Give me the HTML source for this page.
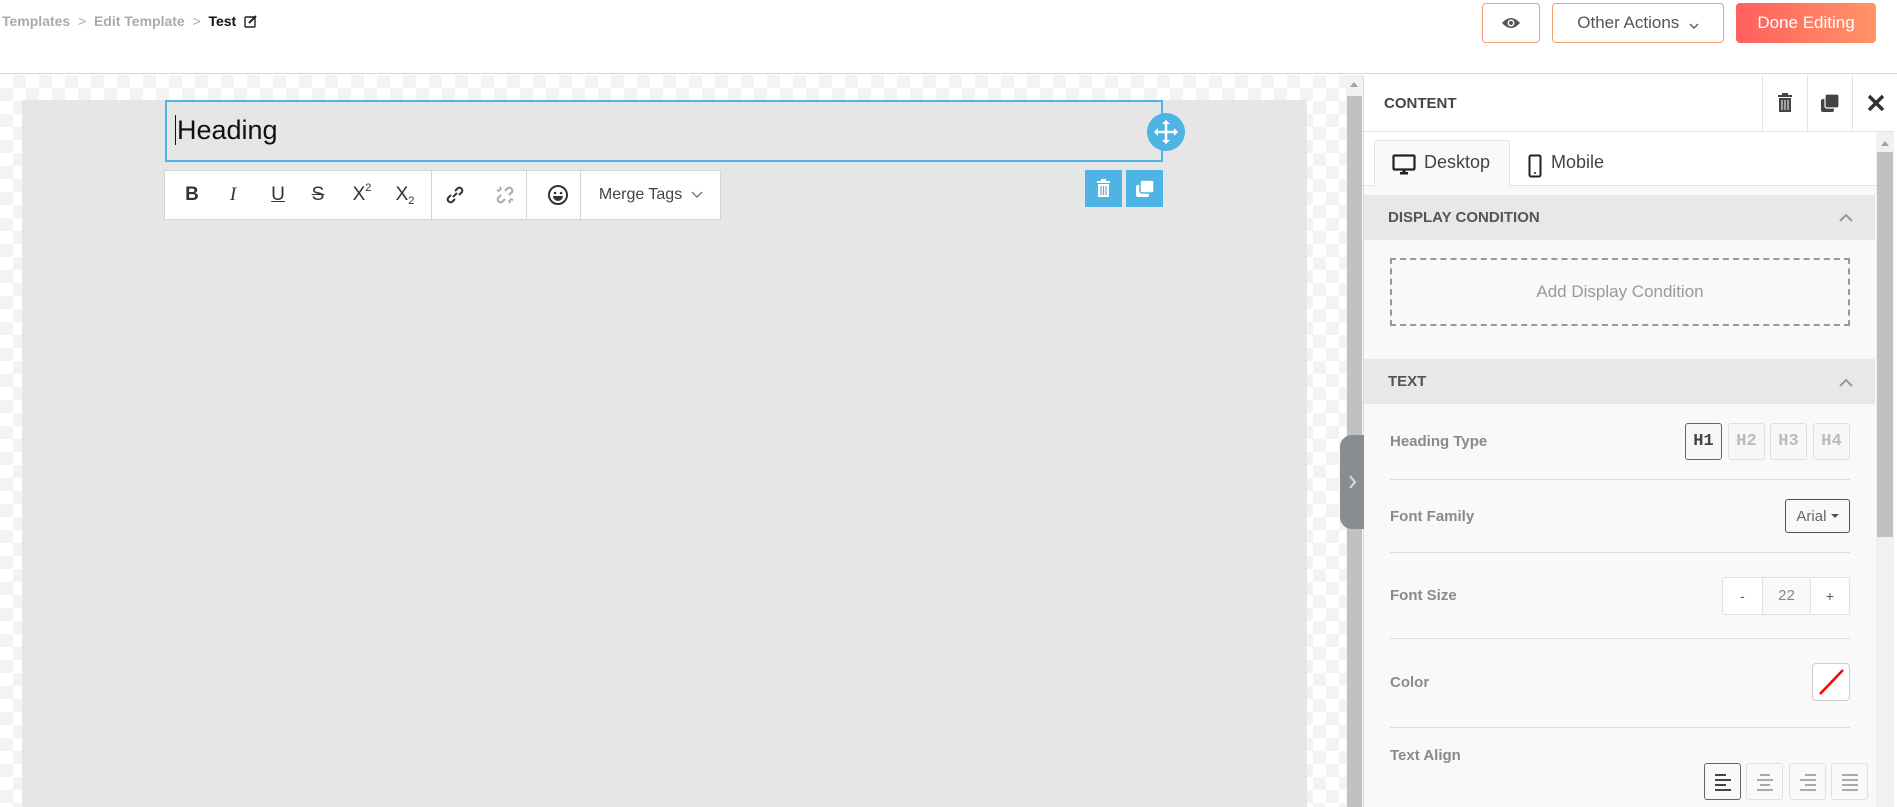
<!DOCTYPE html>
<html><head><meta charset="utf-8"><style>
*{box-sizing:border-box;margin:0;padding:0}
body{width:1897px;height:807px;overflow:hidden;background:#fff;font-family:"Liberation Sans",sans-serif;position:relative}
.a{position:absolute}
.hdr{left:0;top:0;width:1897px;height:74px;border-bottom:1px solid #d6d6d6;background:#fff}
.bc{top:13px;left:2px;font-size:14px;font-weight:bold;color:#aaa}
.bc b{color:#111}
.btn{top:3px;height:40px;border:1px solid #f4a06e;border-radius:4px;background:#fff;display:flex;align-items:center;justify-content:center;font-size:17px;color:#555}
.canvas{left:0;top:75px;width:1346px;height:732px;background-color:#fff;background-image:linear-gradient(45deg,#f3f3f3 25%,transparent 25%,transparent 75%,#f3f3f3 75%),linear-gradient(45deg,#f3f3f3 25%,transparent 25%,transparent 75%,#f3f3f3 75%);background-size:26px 26px;background-position:0 0,13px 13px}
.tb{left:164px;top:170px;width:557px;height:50px;background:#fff;border:1px solid #d5d5d5;display:flex;align-items:center}
.ti{position:absolute;top:0;height:48px;display:flex;align-items:center;justify-content:center;font-size:19px;color:#333}
.sep{position:absolute;top:0;width:1px;height:48px;background:#d5d5d5}
.lbl{left:1390px;font-size:15px;font-weight:bold;color:#8a8a8a}
.div{left:1390px;width:460px;height:1px;background:#ddd}
.hb{top:423px;width:37px;height:37px;border:1px solid #e0e0e0;border-radius:3px;background:#f7f7f7;font-family:"Liberation Mono",monospace;font-weight:bold;font-size:17px;color:#bbb;display:flex;align-items:center;justify-content:center}
.ab{top:763px;width:37px;height:37px;border:1px solid #e0e0e0;border-radius:3px;background:#f9f9f9;display:flex;align-items:center;justify-content:center}
.sh{left:1364px;width:511px;height:45px;background:#e8e8e8;font-size:15px;font-weight:bold;color:#555;padding-left:24px;line-height:45px}
</style></head><body>
<div class="a hdr"></div>
<div class="a bc">Templates &nbsp;<span style="font-weight:normal">&gt;</span>&nbsp; Edit Template &nbsp;<span style="font-weight:normal">&gt;</span>&nbsp; <b>Test</b> &nbsp;<svg width="14" height="14" viewBox="0 0 14 14" style="vertical-align:-2px"><rect x="1" y="3" width="10" height="10" rx="1" fill="none" stroke="#222" stroke-width="1.4"/><path d="M5 9 L12 2" stroke="#222" stroke-width="2"/></svg></div>
<div class="a btn" style="left:1482px;width:58px"><svg width="20" height="14" viewBox="0 0 20 14"><path d="M1 7 Q10 -3 19 7 Q10 17 1 7Z" fill="#555"/><circle cx="10" cy="7" r="3.5" fill="#fff"/><circle cx="10" cy="7" r="2" fill="#555"/></svg></div>
<div class="a btn" style="left:1552px;width:172px">Other Actions &nbsp;<svg width="10" height="7" viewBox="0 0 10 7" style="margin-top:6px"><path d="M1 1l4 4 4-4" fill="none" stroke="#555" stroke-width="1.4"/></svg></div>
<div class="a btn" style="left:1736px;width:140px;border:none;background:linear-gradient(90deg,#ff5f5f,#ff9466);color:#fff">Done Editing</div>

<div class="a canvas"></div>
<div class="a" style="left:22px;top:100px;width:1285px;height:707px;background:#e6e6e6"></div>
<div class="a" style="left:165px;top:100px;width:998px;height:62px;border:2px solid #4db4e4"></div>
<div class="a" style="left:175px;top:115px;font-size:27px;color:#111;font-family:'Liberation Sans',sans-serif"><span style="border-left:1px solid #111;margin-right:1px"></span>Heading</div>
<div class="a" style="left:1147px;top:113px;width:38px;height:38px;border-radius:50%;background:#4db4e4"><svg width="38" height="38" viewBox="0 0 38 38"><path d="M19 9v20M9 19h20" stroke="#fff" stroke-width="2.5"/><path d="M19 7l-4 4h8zM19 31l-4-4h8zM7 19l4-4v8zM31 19l-4-4v8z" fill="#fff"/></svg></div>
<div class="a" style="left:1085px;top:170px;width:37px;height:37px;background:#4db4e4"><svg width="37" height="37" viewBox="0 0 37 37"><rect x="12" y="11" width="13" height="2" fill="#fff"/><rect x="16" y="9" width="5" height="2" fill="#fff"/><rect x="13" y="14" width="11" height="13" fill="#fff"/><path d="M16 16v9M18.5 16v9M21 16v9" stroke="#4db4e4" stroke-width="1.2"/></svg></div>
<div class="a" style="left:1126px;top:170px;width:37px;height:37px;background:#4db4e4"><svg width="37" height="37" viewBox="0 0 37 37"><rect x="10" y="15" width="13" height="12" rx="2" fill="#fff"/><rect x="14" y="10" width="14" height="13" rx="2" fill="#fff" stroke="#4db4e4" stroke-width="1.5"/></svg></div>

<div class="a tb">
<div class="ti" style="left:14px;width:26px;font-weight:bold">B</div>
<div class="ti" style="left:55px;width:26px;font-family:'Liberation Serif',serif;font-style:italic">I</div>
<div class="ti" style="left:100px;width:26px;text-decoration:underline">U</div>
<div class="ti" style="left:140px;width:26px;text-decoration:line-through">S</div>
<div class="ti" style="left:182px;width:30px"><span>X</span><span style="font-size:11px;position:relative;top:-7px">2</span></div>
<div class="ti" style="left:225px;width:30px"><span>X</span><span style="font-size:11px;position:relative;top:6px">2</span></div>
<div class="sep" style="left:266px"></div>
<div class="ti" style="left:272px;width:36px"><svg width="22" height="22" viewBox="0 0 22 22"><path d="M9 13l4-4M7 11l-3 3a3 3 0 004 4l3-3M15 11l3-3a3 3 0 00-4-4l-3 3" fill="none" stroke="#333" stroke-width="2"/></svg></div>
<div class="ti" style="left:322px;width:36px"><svg width="22" height="22" viewBox="0 0 22 22"><path d="M7 11l-3 3a3 3 0 004 4l3-3M15 11l3-3a3 3 0 00-4-4l-3 3M6 3l1 3M3 6l3 1M16 19l-1-3M19 16l-3-1" fill="none" stroke="#aaa" stroke-width="2"/></svg></div>
<div class="sep" style="left:361px"></div>
<div class="ti" style="left:375px;width:36px"><svg width="22" height="22" viewBox="0 0 22 22"><circle cx="11" cy="11" r="9" fill="none" stroke="#333" stroke-width="2"/><circle cx="8" cy="9" r="1.3" fill="#333"/><circle cx="14" cy="9" r="1.3" fill="#333"/><path d="M6 12h10a5 5 0 01-10 0z" fill="#333"/></svg></div>
<div class="sep" style="left:415px"></div>
<div class="ti" style="left:416px;width:140px;font-size:16px;color:#444">Merge Tags &nbsp;<svg width="12" height="8" viewBox="0 0 12 8"><path d="M1 1l5 5 5-5" fill="none" stroke="#777" stroke-width="1.4"/></svg></div>
</div>

<!-- canvas scrollbar -->
<div class="a" style="left:1346px;top:75px;width:17px;height:732px;background:#f1f1f1"></div>
<div class="a" style="left:1347px;top:96px;width:15px;height:711px;background:#c1c1c1"></div>
<div class="a" style="left:1350px;top:82px;width:0;height:0;border-left:4px solid transparent;border-right:4px solid transparent;border-bottom:5px solid #a3a3a3"></div>

<!-- panel -->
<div class="a" style="left:1363px;top:75px;width:534px;height:732px;background:#fff;border-left:1px solid #ddd"></div>
<div class="a" style="left:1364px;top:131px;width:512px;height:676px;background:#f9f9f9"></div>
<div class="a" style="left:1364px;top:131px;width:530px;height:1px;background:#e4e4e4"></div>
<div class="a" style="left:1384px;top:95px;font-size:15px;font-weight:bold;color:#444">CONTENT</div>
<div class="a" style="left:1762px;top:75px;width:1px;height:56px;background:#e4e4e4"></div>
<div class="a" style="left:1807px;top:75px;width:1px;height:56px;background:#e4e4e4"></div>
<div class="a" style="left:1852px;top:75px;width:1px;height:56px;background:#e4e4e4"></div>
<svg class="a" style="left:1775px;top:93px" width="20" height="20" viewBox="0 0 20 20"><rect x="3" y="2" width="14" height="2" fill="#444"/><rect x="7" y="0" width="6" height="2" fill="#444"/><rect x="4" y="5" width="12" height="14" fill="#444"/><path d="M7 7v10M10 7v10M13 7v10" stroke="#fff" stroke-width="1"/></svg>
<svg class="a" style="left:1820px;top:93px" width="20" height="20" viewBox="0 0 20 20"><rect x="1" y="6" width="13" height="13" rx="2" fill="#444"/><rect x="5" y="1" width="14" height="14" rx="2" fill="#444" stroke="#fff" stroke-width="1.2"/></svg>
<svg class="a" style="left:1866px;top:93px" width="20" height="20" viewBox="0 0 20 20"><path d="M3 3l14 14M17 3L3 17" stroke="#333" stroke-width="3.5"/></svg>

<!-- panel scrollbar -->
<div class="a" style="left:1876px;top:132px;width:18px;height:675px;background:#f1f1f1"></div>
<div class="a" style="left:1877px;top:152px;width:16px;height:385px;background:#c1c1c1"></div>
<div class="a" style="left:1881px;top:141px;width:0;height:0;border-left:4px solid transparent;border-right:4px solid transparent;border-bottom:5px solid #a3a3a3"></div>

<!-- tabs -->
<div class="a" style="left:1364px;top:132px;width:512px;height:54px;background:#fff;border-bottom:1px solid #e4e4e4"></div>
<div class="a" style="left:1374px;top:140px;width:136px;height:47px;background:#f9f9f9;border:1px solid #e4e4e4;border-bottom:none;border-radius:3px 3px 0 0"></div>
<svg class="a" style="left:1392px;top:154px" width="24" height="22" viewBox="0 0 24 22"><rect x="1.5" y="1.5" width="21" height="14" rx="1" fill="none" stroke="#222" stroke-width="2.2"/><rect x="8" y="18" width="8" height="2.5" fill="#222"/><rect x="10.5" y="15" width="3" height="4" fill="#222"/></svg>
<div class="a" style="left:1424px;top:152px;font-size:18px;color:#444">Desktop</div>
<svg class="a" style="left:1528px;top:154px" width="14" height="24" viewBox="0 0 14 24"><rect x="1.5" y="1.5" width="11" height="21" rx="1.5" fill="none" stroke="#222" stroke-width="2"/><circle cx="7" cy="19" r="1" fill="#222"/></svg>
<div class="a" style="left:1551px;top:152px;font-size:18px;color:#444">Mobile</div>

<div class="a sh" style="top:195px">DISPLAY CONDITION</div>
<svg class="a" style="left:1838px;top:213px" width="16" height="10" viewBox="0 0 16 10"><path d="M2 8l6-6 6 6" fill="none" stroke="#999" stroke-width="2"/></svg>
<div class="a" style="left:1390px;top:258px;width:460px;height:68px;border:2px dashed #999;display:flex;align-items:center;justify-content:center;font-size:17px;color:#999">Add Display Condition</div>

<div class="a sh" style="top:359px">TEXT</div>
<svg class="a" style="left:1838px;top:378px" width="16" height="10" viewBox="0 0 16 10"><path d="M2 8l6-6 6 6" fill="none" stroke="#999" stroke-width="2"/></svg>

<div class="a lbl" style="top:433px">Heading Type</div>
<div class="a hb" style="left:1685px;border-color:#666;color:#444;background:#f7f7f7">H1</div>
<div class="a hb" style="left:1728px">H2</div>
<div class="a hb" style="left:1770px">H3</div>
<div class="a hb" style="left:1813px">H4</div>
<div class="a div" style="top:479px"></div>

<div class="a lbl" style="top:508px">Font Family</div>
<div class="a" style="left:1785px;top:499px;width:65px;height:34px;border:1px solid #555;border-radius:3px;font-size:15px;color:#666;display:flex;align-items:center;justify-content:center">Arial&nbsp;<span style="border-left:4px solid transparent;border-right:4px solid transparent;border-top:4px solid #555;display:inline-block"></span></div>
<div class="a div" style="top:552px"></div>

<div class="a lbl" style="top:587px">Font Size</div>
<div class="a" style="left:1722px;top:577px;width:128px;height:38px;border:1px solid #e0e0e0;border-radius:3px;background:#fff;font-size:14px;color:#555">
<div class="a" style="left:0;width:39px;height:36px;line-height:36px;text-align:center">-</div>
<div class="a" style="left:39px;width:49px;height:36px;line-height:36px;text-align:center;background:#f9f9f9;border-left:1px solid #e0e0e0;border-right:1px solid #e0e0e0;color:#888;font-size:15px">22</div>
<div class="a" style="left:88px;width:38px;height:36px;line-height:36px;text-align:center">+</div>
</div>
<div class="a div" style="top:638px"></div>

<div class="a lbl" style="top:674px">Color</div>
<div class="a" style="left:1812px;top:663px;width:38px;height:38px;border:1px solid #ccc;border-radius:4px;background:#fff"><svg width="36" height="36" viewBox="0 0 36 36"><path d="M7 30L30 6" stroke="red" stroke-width="2.5"/></svg></div>
<div class="a div" style="top:727px"></div>

<div class="a lbl" style="top:747px">Text Align</div>
<div class="a ab" style="left:1704px;border-color:#666"><svg width="18" height="18" viewBox="0 0 18 18"><path d="M1 2h11M1 7h16M1 12h11M1 17h16" stroke="#444" stroke-width="2"/></svg></div>
<div class="a ab" style="left:1746px"><svg width="18" height="18" viewBox="0 0 18 18"><path d="M4 2h10M1 7h16M4 12h10M1 17h16" stroke="#aaa" stroke-width="2"/></svg></div>
<div class="a ab" style="left:1789px"><svg width="18" height="18" viewBox="0 0 18 18"><path d="M6 2h11M1 7h16M6 12h11M1 17h16" stroke="#aaa" stroke-width="2"/></svg></div>
<div class="a ab" style="left:1831px"><svg width="18" height="18" viewBox="0 0 18 18"><path d="M1 2h16M1 7h16M1 12h16M1 17h16" stroke="#aaa" stroke-width="2"/></svg></div>

<!-- collapse handle -->
<div class="a" style="left:1340px;top:435px;width:24px;height:94px;background:#8a8d90;border-radius:12px 0 0 12px"><svg width="24" height="94" viewBox="0 0 24 94"><path d="M10 41l5 6-5 6" fill="none" stroke="#ddd" stroke-width="2"/></svg></div>
</body></html>
